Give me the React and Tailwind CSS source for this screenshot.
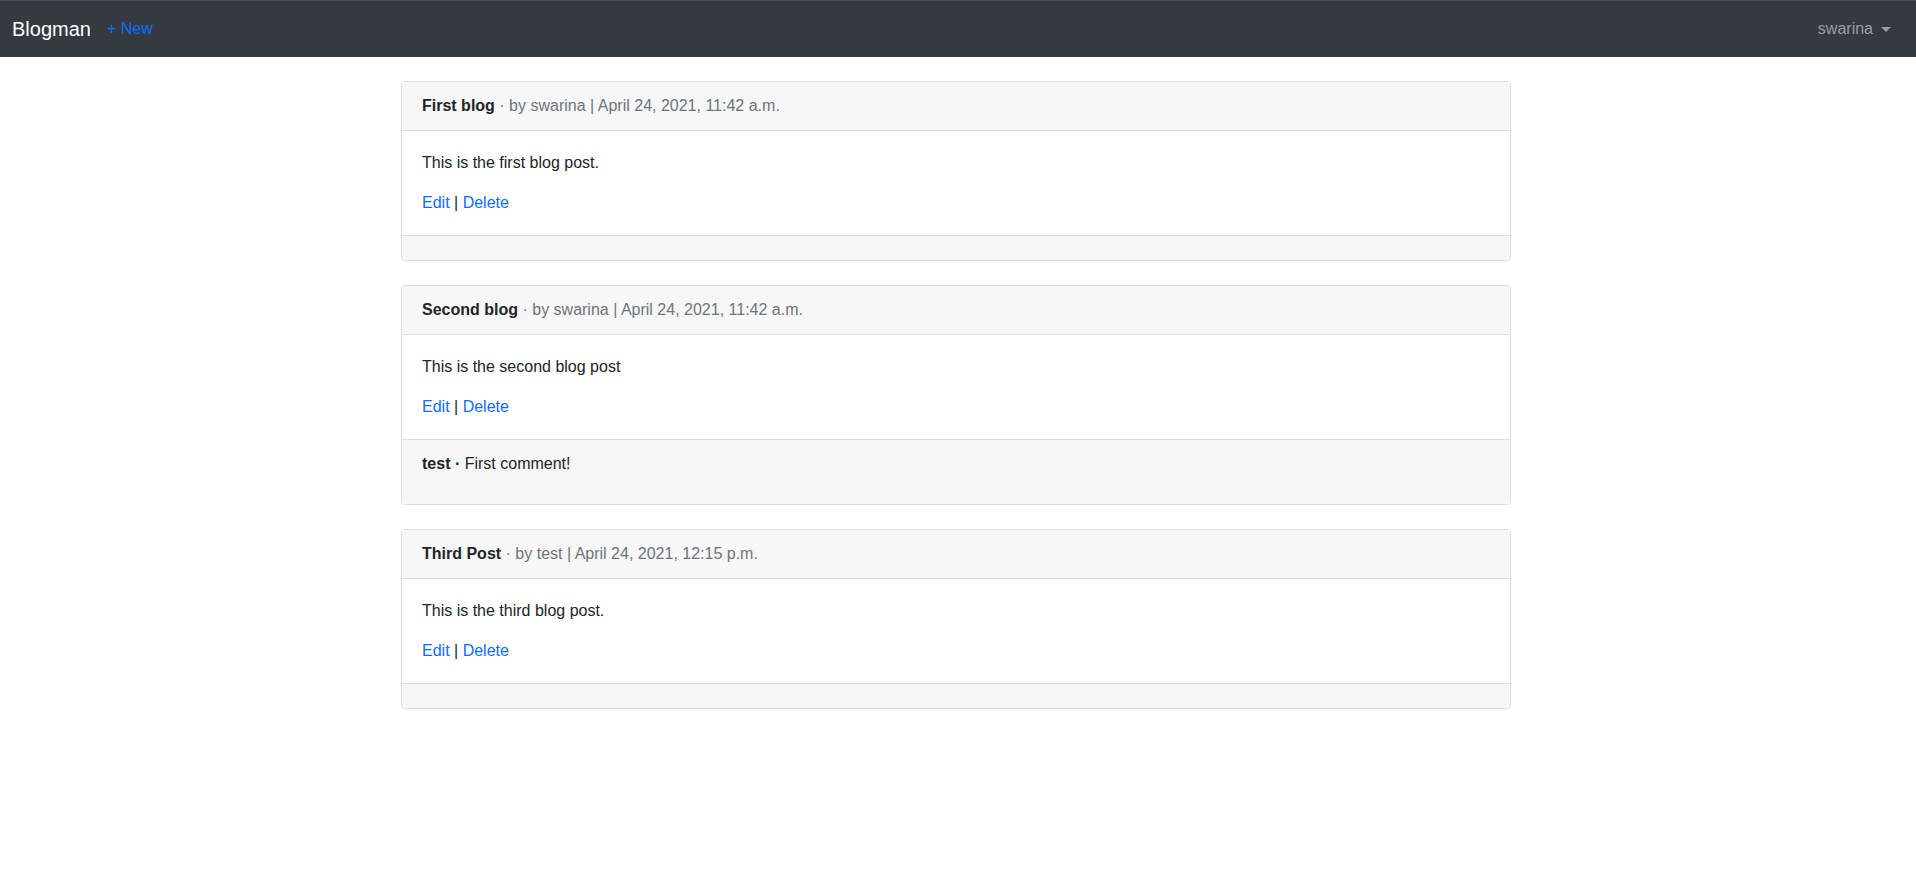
const posts = [
  {
    title: "First blog",
    author: "swarina",
    date: "April 24, 2021, 11:42 a.m.",
    body: "This is the first blog post.",
    comments: [],
  },
  {
    title: "Second blog",
    author: "swarina",
    date: "April 24, 2021, 11:42 a.m.",
    body: "This is the second blog post",
    comments: [{ user: "test", text: "First comment!" }],
  },
  {
    title: "Third Post",
    author: "test",
    date: "April 24, 2021, 12:15 p.m.",
    body: "This is the third blog post.",
    comments: [],
  },
];

const Navbar = () => (
  <nav className="flex items-center justify-between h-[57px] bg-[#343a40] border-t border-[#4b5157] pl-[12px] pr-[17px]">
    <div className="flex items-center">
      <a href="#" className="text-white text-[20px] leading-[30px] mr-4">
        Blogman
      </a>
      <a href="#" className="text-[#0d6efd] text-base leading-6">
        + New
      </a>
    </div>
    <a
      href="#"
      className="flex items-center text-[#9a9da0] text-base leading-6 pr-2"
    >
      swarina
      <span className="ml-[8px] mt-[1px] w-0 h-0 border-x-[5px] border-x-transparent border-t-[5px] border-t-[#9a9da0]" />
    </a>
  </nav>
);

const PostCard = ({ post }) => (
  <div className="mb-6 border border-[#dfdfdf] rounded-[4px] bg-white overflow-hidden">
    <div className="px-5 py-3 bg-[#f7f7f7] border-b border-[#dfdfdf] leading-6">
      <span className="font-bold text-[#212529]">{post.title}</span>
      <span className="text-[#6c757d]">
        {" "}
        · by {post.author} | {post.date}
      </span>
    </div>
    <div className="p-5 leading-6 text-[#212529]">
      <p className="mb-4">{post.body}</p>
      <p>
        <a href="#" className="text-[#0d6efd]">
          Edit
        </a>{" "}
        |{" "}
        <a href="#" className="text-[#0d6efd]">
          Delete
        </a>
      </p>
    </div>
    <div className="px-5 py-3 bg-[#f7f7f7] border-t border-[#dfdfdf] leading-6 text-[#212529]">
      {post.comments.map((c, i) => (
        <p key={i} className="mb-4">
          <span className="font-bold">{c.user} ·</span> {c.text}
        </p>
      ))}
    </div>
  </div>
);

export default function App() {
  return (
    <div
      className="min-h-screen bg-white text-base"
      style={{ fontFamily: '"Liberation Sans", Arial, sans-serif' }}
    >
      <Navbar />
      <div className="max-w-[1140px] mx-auto pl-[13px] pr-[17px] pt-6">
        {posts.map((post, i) => (
          <PostCard key={i} post={post} />
        ))}
      </div>
    </div>
  );
}
